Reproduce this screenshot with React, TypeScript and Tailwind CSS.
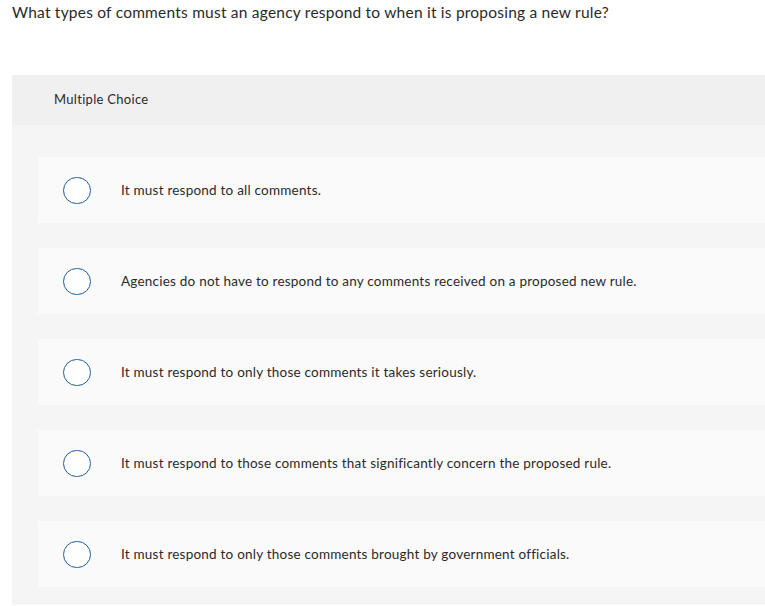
import React from 'react';

const options = [
  'It must respond to all comments.',
  'Agencies do not have to respond to any comments received on a proposed new rule.',
  'It must respond to only those comments it takes seriously.',
  'It must respond to those comments that significantly concern the proposed rule.',
  'It must respond to only those comments brought by government officials.',
];

export default function App(): React.ReactElement {
  return (
    <div
      className="w-[765px] h-[606px] bg-white overflow-hidden text-[#333]"
      style={{ fontFamily: 'Lato, "Open Sans", sans-serif' }}
    >
      <div className="pl-3 pt-[2px] text-[15.5px] leading-[20px] tracking-[0.22px] text-[#2a2a2a]">
        What types of comments must an agency respond to when it is proposing a new rule?
      </div>

      <div className="ml-3 mt-[53px] bg-[#f5f5f5]">
        <div className="h-[50px] bg-[#f0f0f0] pl-[42px] flex items-center text-[13px] tracking-[0.3px] text-[#2a2a2a]">
          Multiple Choice
        </div>

        <div className="pt-8 pb-[18px] pl-[26px] flex flex-col gap-[25px]">
          {options.map((text) => (
            <label
              key={text}
              className="h-[66px] bg-[#fafafa] flex items-center cursor-pointer"
            >
              <span className="ml-[25px] w-[28px] h-[27px] rounded-full border-[1.5px] border-[#215d9c] bg-white shrink-0" />
              <span className="ml-[30px] text-[13.5px] tracking-[0.22px] text-[#2a2a2a]">{text}</span>
            </label>
          ))}
        </div>
      </div>
    </div>
  );
}
